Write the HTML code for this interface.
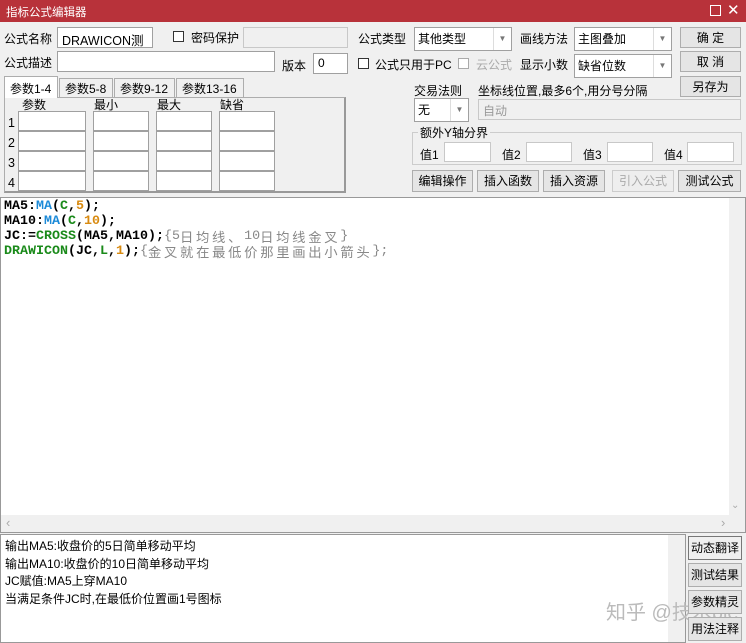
<!DOCTYPE html>
<html><head><meta charset="utf-8"><style>
*{box-sizing:border-box;margin:0;padding:0}
body{width:746px;height:643px;overflow:hidden;background:#f0f0f0;font-family:"Liberation Sans","Noto Sans CJK SC",sans-serif;font-size:12px;color:#000;position:relative}
.a{position:absolute;white-space:nowrap}
.in{position:absolute;background:#fff;border:1px solid #a0a0a0}
.dis{position:absolute;background:#f0f0f0;border:1px solid #c8c8c8}
.btn{position:absolute;background:#e5e5e5;border:1px solid #adadad;text-align:center;line-height:20px;font-size:12px}
.cb{position:absolute;width:11px;height:11px;border:1px solid #333;background:#fff}
.dd{position:absolute;background:#fff;border:1px solid #a0a0a0;padding-left:3px;line-height:22px}
.dd i{position:absolute;right:0;top:0;width:18px;height:100%;border-left:1px solid #ddd;font-style:normal;color:#777;font-size:8px;text-align:center}
.code{font-family:"Liberation Mono",monospace;font-weight:bold;font-size:13.33px;line-height:15px}
.code div{height:15px;overflow:visible;white-space:nowrap}
.b{color:#1c8ad8}.g{color:#1a8a1a}.o{color:#d88a10}.c{color:#888;font-weight:normal;vertical-align:top;line-height:15px}
.k{font-family:"Noto Sans CJK SC",sans-serif;font-size:13.33px;letter-spacing:2.7px;font-weight:normal;line-height:15px;vertical-align:top}
</style></head><body>
<div class="a" style="left:0;top:0;width:746px;height:22px;background:#b8323a;color:#fff;padding:4px 0 0 6px;font-size:11.5px">指标公式编辑器</div>
<div class="a" style="left:710px;top:5px;width:11px;height:11px;border:1px solid #fff"></div>
<div class="a" style="left:727px;top:1px;color:#fff;font-size:15px">✕</div>

<div class="a" style="left:4px;top:30px">公式名称</div>
<div class="in" style="left:57px;top:27px;width:96px;height:21px;padding:2px 4px;font-size:12.5px;overflow:hidden">DRAWICON测试</div>
<div class="cb" style="left:173px;top:31px"></div>
<div class="a" style="left:191px;top:29px">密码保护</div>
<div class="dis" style="left:243px;top:27px;width:105px;height:21px"></div>
<div class="a" style="left:358px;top:30px">公式类型</div>
<div class="dd" style="left:414px;top:27px;width:98px;height:24px">其他类型<i>▼</i></div>
<div class="a" style="left:520px;top:30px">画线方法</div>
<div class="dd" style="left:574px;top:27px;width:98px;height:24px">主图叠加<i>▼</i></div>
<div class="btn" style="left:680px;top:27px;width:61px;height:21px">确 定</div>

<div class="a" style="left:4px;top:54px">公式描述</div>
<div class="in" style="left:57px;top:51px;width:218px;height:21px"></div>
<div class="a" style="left:282px;top:57px">版本</div>
<div class="in" style="left:313px;top:53px;width:35px;height:21px;padding:2px 4px">0</div>
<div class="cb" style="left:358px;top:58px"></div>
<div class="a" style="left:375px;top:56px">公式只用于PC</div>
<div class="cb" style="left:458px;top:58px;border-color:#aaa"></div>
<div class="a" style="left:476px;top:56px;color:#aaa">云公式</div>
<div class="a" style="left:520px;top:56px">显示小数</div>
<div class="dd" style="left:574px;top:54px;width:98px;height:24px">缺省位数<i>▼</i></div>
<div class="btn" style="left:680px;top:51px;width:61px;height:21px">取 消</div>
<div class="btn" style="left:680px;top:76px;width:61px;height:21px">另存为</div>

<div class="a" style="left:4px;top:76px;width:54px;height:22px;background:#fff;border:1px solid #adadad;border-bottom:none;padding:3px 0 0 5px;z-index:2">参数1-4</div>
<div class="a" style="left:59px;top:78px;width:54px;height:19px;border:1px solid #adadad;border-bottom:none;padding:1px 0 0 5px">参数5-8</div>
<div class="a" style="left:114px;top:78px;width:61px;height:19px;border:1px solid #adadad;border-bottom:none;padding:1px 0 0 5px">参数9-12</div>
<div class="a" style="left:176px;top:78px;width:68px;height:19px;border:1px solid #adadad;border-bottom:none;padding:1px 0 0 5px">参数13-16</div>
<div class="a" style="left:4px;top:97px;width:342px;height:96px;border:1px solid #adadad;border-right:2px solid #999;border-bottom:2px solid #999"></div>
<div class="a" style="left:22px;top:96px">参数</div>
<div class="a" style="left:94px;top:96px">最小</div>
<div class="a" style="left:157px;top:96px">最大</div>
<div class="a" style="left:220px;top:96px">缺省</div>
<div class="a" style="left:8px;top:113px;line-height:20px;font-size:12.5px">1<br>2<br>3<br>4</div>
<div class="a" style="left:18px;top:111px">
<div style="position:relative">
<div class="in" style="left:0;top:0;width:68px;height:20px"></div><div class="in" style="left:75px;top:0;width:56px;height:20px"></div><div class="in" style="left:138px;top:0;width:56px;height:20px"></div><div class="in" style="left:201px;top:0;width:56px;height:20px"></div>
<div class="in" style="left:0;top:20px;width:68px;height:20px"></div><div class="in" style="left:75px;top:20px;width:56px;height:20px"></div><div class="in" style="left:138px;top:20px;width:56px;height:20px"></div><div class="in" style="left:201px;top:20px;width:56px;height:20px"></div>
<div class="in" style="left:0;top:40px;width:68px;height:20px"></div><div class="in" style="left:75px;top:40px;width:56px;height:20px"></div><div class="in" style="left:138px;top:40px;width:56px;height:20px"></div><div class="in" style="left:201px;top:40px;width:56px;height:20px"></div>
<div class="in" style="left:0;top:60px;width:68px;height:20px"></div><div class="in" style="left:75px;top:60px;width:56px;height:20px"></div><div class="in" style="left:138px;top:60px;width:56px;height:20px"></div><div class="in" style="left:201px;top:60px;width:56px;height:20px"></div>
</div></div>

<div class="a" style="left:414px;top:82px">交易法则</div>
<div class="a" style="left:478px;top:82px">坐标线位置,最多6个,用分号分隔</div>
<div class="dd" style="left:414px;top:98px;width:55px;height:24px">无<i>▼</i></div>
<div class="dis" style="left:478px;top:99px;width:263px;height:21px;padding:2px 4px;color:#999">自动</div>
<div class="a" style="left:412px;top:132px;width:330px;height:33px;border:1px solid #ccc"></div>
<div class="a" style="left:418px;top:124px;background:#f0f0f0;padding:0 2px">额外Y轴分界</div>
<div class="a" style="left:420px;top:146px">值1</div><div class="in" style="left:444px;top:142px;width:47px;height:20px;border-color:#c8c8c8"></div>
<div class="a" style="left:502px;top:146px">值2</div><div class="in" style="left:526px;top:142px;width:46px;height:20px;border-color:#c8c8c8"></div>
<div class="a" style="left:583px;top:146px">值3</div><div class="in" style="left:607px;top:142px;width:46px;height:20px;border-color:#c8c8c8"></div>
<div class="a" style="left:664px;top:146px">值4</div><div class="in" style="left:687px;top:142px;width:47px;height:20px;border-color:#c8c8c8"></div>
<div class="btn" style="left:412px;top:170px;width:61px;height:22px">编辑操作</div>
<div class="btn" style="left:477px;top:170px;width:62px;height:22px">插入函数</div>
<div class="btn" style="left:543px;top:170px;width:62px;height:22px">插入资源</div>
<div class="btn" style="left:612px;top:170px;width:62px;height:22px;color:#aaa;background:#eee;border-color:#ccc">引入公式</div>
<div class="btn" style="left:678px;top:170px;width:63px;height:22px">测试公式</div>

<div class="a" style="left:0;top:197px;width:746px;height:336px;background:#fff;border:1px solid #999"></div>
<div class="a code" style="left:4px;top:199px">
<div>MA5:<span class="b">MA</span>(<span class="g">C</span>,<span class="o">5</span>);</div>
<div>MA10:<span class="b">MA</span>(<span class="g">C</span>,<span class="o">10</span>);</div>
<div>JC:=<span class="g">CROSS</span>(MA5,MA10);<span class="c">{5<span class="k">日均线、</span>10<span class="k">日均线金叉</span>}</span></div>
<div><span class="g">DRAWICON</span>(JC,<span class="g">L</span>,<span class="o">1</span>);<span class="c">{<span class="k">金叉就在最低价那里画出小箭头</span>};</span></div>
</div>
<div class="a" style="left:729px;top:198px;width:16px;height:317px;background:#f0f0f0"></div>
<div class="a" style="left:731px;top:500px;color:#aaa;font-size:10px">⌄</div>
<div class="a" style="left:1px;top:515px;width:744px;height:17px;background:#f0f0f0"></div>
<div class="a" style="left:6px;top:515px;color:#aaa;font-size:13px">‹</div>
<div class="a" style="left:721px;top:515px;color:#aaa;font-size:13px">›</div>

<div class="a" style="left:0;top:534px;width:686px;height:109px;background:#fff;border:1px solid #999"></div>
<div class="a" style="left:668px;top:535px;width:17px;height:107px;background:#f0f0f0"></div>
<div class="a" style="left:5px;top:538px;line-height:17.5px;font-size:12px">输出MA5:收盘价的5日简单移动平均<br>输出MA10:收盘价的10日简单移动平均<br>JC赋值:MA5上穿MA10<br>当满足条件JC时,在最低价位置画1号图标</div>
<div class="a" style="left:606px;top:596px;font-size:20px;color:#bbb">知乎 @技术pie</div>
<div class="btn" style="left:688px;top:536px;width:54px;height:24px;line-height:22px;background:#f0f0f0;border:1px solid #777">动态翻译</div>
<div class="btn" style="left:688px;top:563px;width:54px;height:24px;line-height:22px">测试结果</div>
<div class="btn" style="left:688px;top:590px;width:54px;height:24px;line-height:22px">参数精灵</div>
<div class="btn" style="left:688px;top:617px;width:54px;height:24px;line-height:22px">用法注释</div>
</body></html>
